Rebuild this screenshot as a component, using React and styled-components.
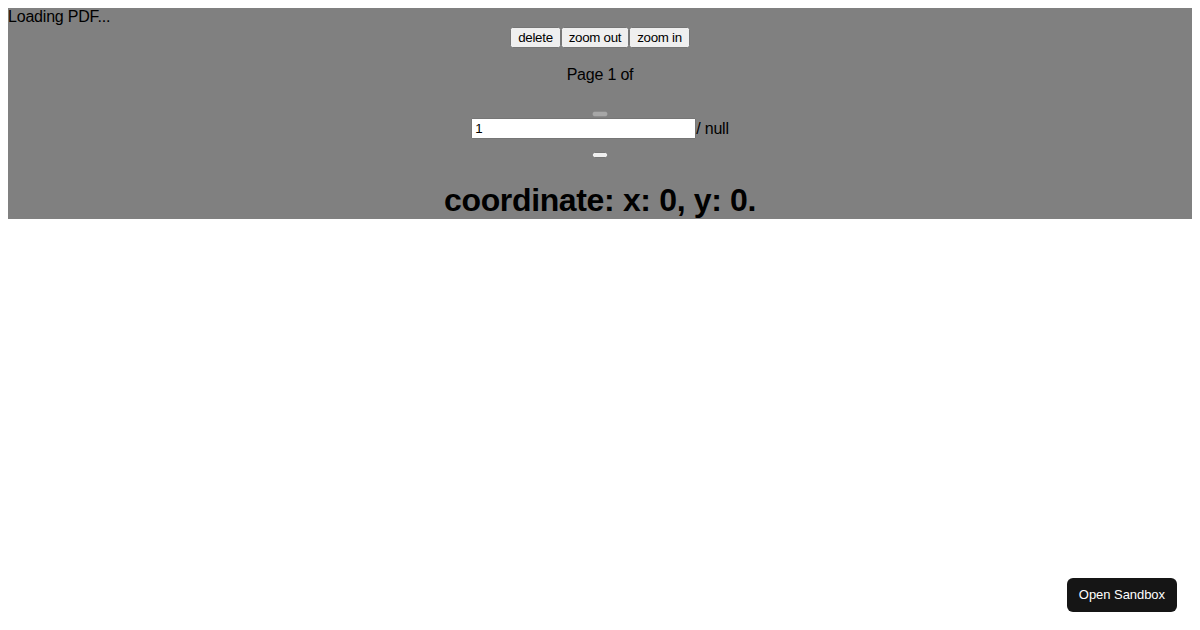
import styled, { createGlobalStyle } from "styled-components";

const GlobalStyle = createGlobalStyle`
  body {
    margin: 8px;
    background: #ffffff;
    font-family: "Liberation Sans", Arial, sans-serif;
    font-size: 16px;
    letter-spacing: -0.2px;
    color: #000000;
  }
`;

const Viewer = styled.div`
  background-color: #808080;
`;

const Loading = styled.div`
  line-height: normal;
`;

const Toolbar = styled.div`
  display: flex;
  justify-content: center;
  padding-top: 0.6px;
`;

const ToolButton = styled.button`
  font-family: "Liberation Sans", Arial, sans-serif;
  font-size: 13.333px;
  letter-spacing: -0.3px;
  color: #000000;
`;

const PageLabel = styled.p`
  margin: 18px 0 0;
  text-align: center;
`;

const Pager = styled.div`
  display: flex;
  flex-direction: column;
  align-items: center;
  padding-top: 27.6px;
`;

const StepButton = styled.button`
  margin-top: ${(p) => p.$gap || 0}px;
`;

const InputRow = styled.div`
  display: flex;
  align-items: center;
  margin-top: 1px;
  height: 21px;
`;

const PageInput = styled.input`
  width: 225px;
  height: 21px;
  box-sizing: border-box;
  font-family: "Liberation Sans", Arial, sans-serif;
  font-size: 13.333px;
  color: #000000;
`;

const Coordinate = styled.h1`
  margin: 24px 0 0;
  font-size: 32px;
  font-weight: bold;
  letter-spacing: -0.35px;
  line-height: normal;
  text-align: center;
`;

const SandboxButton = styled.button`
  position: fixed;
  right: 23px;
  bottom: 18px;
  height: 34px;
  padding: 0 12px 1px;
  border: none;
  border-radius: 6px;
  background: #151515;
  color: #ffffff;
  font-family: "Liberation Sans", Arial, sans-serif;
  font-size: 13px;
  letter-spacing: -0.05px;
  cursor: pointer;
`;

export default function App() {
  const page = 1;
  const total = null;

  return (
    <>
      <GlobalStyle />
      <Viewer>
        <Loading>Loading PDF...</Loading>
        <Toolbar>
          <ToolButton>delete</ToolButton>
          <ToolButton>zoom out</ToolButton>
          <ToolButton>zoom in</ToolButton>
        </Toolbar>
        <PageLabel>Page {page} of</PageLabel>
        <Pager>
          <StepButton disabled />
          <InputRow>
            <PageInput defaultValue={page} />
            / {String(total)}
          </InputRow>
          <StepButton $gap={13} />
        </Pager>
        <Coordinate>coordinate: x: 0, y: 0.</Coordinate>
      </Viewer>
      <SandboxButton>Open Sandbox</SandboxButton>
    </>
  );
}
